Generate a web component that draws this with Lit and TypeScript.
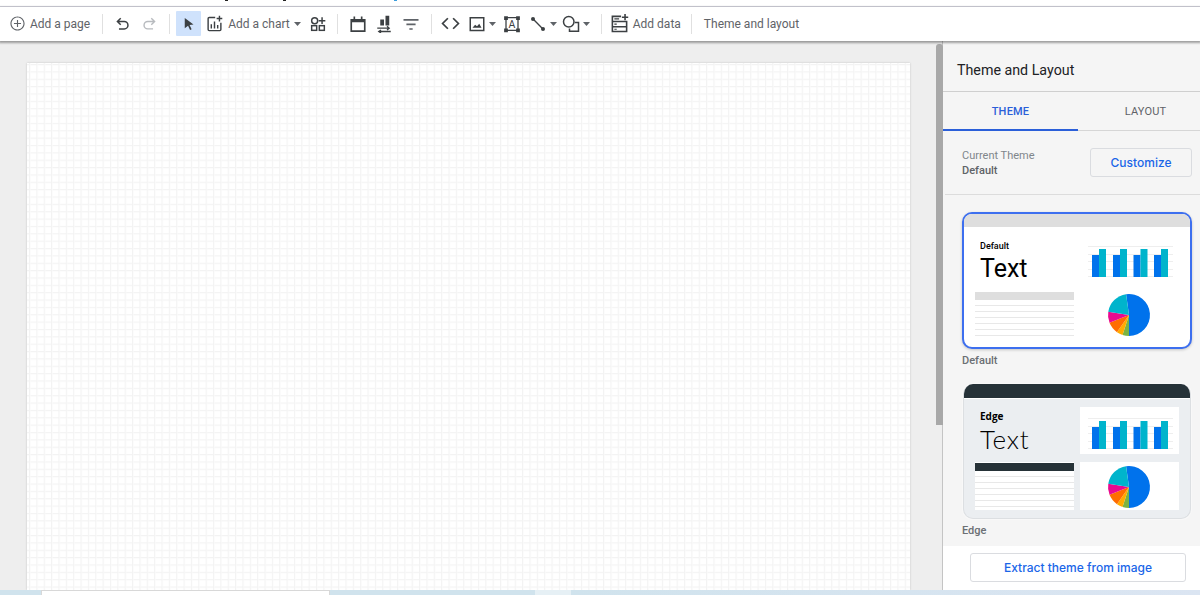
import { LitElement, html, css, svg } from "lit";
import { customElement } from "lit/decorators.js";

const pieSlices: [number, number, string][] = [
  [-8, 180, "#0072ec"],
  [180, 198, "#7cb342"],
  [198, 215, "#ffab00"],
  [215, 248, "#ff6d00"],
  [248, 279, "#e9098f"],
  [279, 352, "#00b4cc"],
];

function arc(cx: number, cy: number, r: number, a: number, b: number) {
  const p = (d: number) => {
    const t = ((d - 90) * Math.PI) / 180;
    return `${(cx + r * Math.cos(t)).toFixed(2)} ${(cy + r * Math.sin(t)).toFixed(2)}`;
  };
  return `M${cx} ${cy}L${p(a)}A${r} ${r} 0 ${b - a > 180 ? 1 : 0} 1 ${p(b)}Z`;
}

const barChart = html`<svg class="fill" viewBox="0 0 99 47">
  ${[11, 19, 26, 34, 41].map((y) => svg`<rect x="8" y="${y}" width="85" height="1" fill="#eeeeee"></rect>`)}
  ${[12, 33, 53.5, 74].map(
    (x) => svg`<rect x="${x}" y="20" width="7" height="22" fill="#0072ec"></rect>
      <rect x="${x + 7}" y="14" width="7" height="28" fill="#00b4cc"></rect>`,
  )}
</svg>`;

const pieChart = html`<svg class="fill" viewBox="0 0 99 47">
  ${pieSlices.map(([a, b, c]) => svg`<path d="${arc(49, 25, 21, a, b)}" fill="${c}"></path>`)}
</svg>`;

const I = (w: number, body: unknown, cls = "") =>
  html`<svg class="ico ${cls}" width="${w}" height="${w}" viewBox="0 0 24 24">${body}</svg>`;

const caret = (cls: string) =>
  html`<svg class="caret ${cls}" width="7" height="4" viewBox="0 0 7 4"><path d="M0 0h7L3.5 4z" fill="#5f6368"></path></svg>`;

@customElement("theme-card")
export class ThemeCard extends LitElement {
  static properties = { name: {}, variant: {} };
  name = "";
  variant = "";
  static styles = css`
    :host { display: block; font-family: Roboto, sans-serif; }
    .card { box-sizing: border-box; height: 137px; border-radius: 10px; overflow: hidden; background: #fff; display: flex; flex-direction: column; }
    .default { width: 230px; border: 2px solid #3d6fef; box-shadow: 0 1px 3px rgba(0,0,0,.2); }
    .edge { width: 228px; height: 135px; margin-left: 1px; background: #ebeef1; border: 1px solid #dcdfe2; border-top: 0; box-shadow: 0 0 0 1px #f8f8f8; }
    .bar { height: 13px; flex: none; background: #dedede; }
    .edge .bar { height: 14px; background: #263238; border-bottom: 1px solid #fff; }
    .grid { display: grid; grid-template-columns: 99px 99px; grid-template-rows: 47px 48px; column-gap: 6px; row-gap: 8px; padding: 8px 0 0 11px; }
    .cell { background: #fff; min-width: 0; }
    .txt { background: transparent; padding: 6px 0 0 5px; display: flex; flex-direction: column; color: #000; }
    .edge .txt { padding-top: 4px; }
    .t1 { font-size: 9px; font-weight: 500; line-height: 11px; }
    .edge .t1 { font-family: "Open Sans", sans-serif; font-weight: 700; font-size: 10px; }
    .t2 { font-size: 25px; line-height: 30px; margin-top: 2px; }
    .edge .t2 { font-family: Lato, sans-serif; font-weight: 300; font-size: 26px; letter-spacing: .8px; }
    .table { display: flex; flex-direction: column; padding-top: 1px; }
    .default .table { background: transparent; padding-top: 2px; }
    .th { height: 8px; background: #dedede; margin-bottom: 5px; flex: none; }
    .edge .th { background: #263238; }
    .row { height: 1px; background: #e8e8e8; margin-bottom: 5px; flex: none; }
    svg.fill { display: block; width: 99px; height: 47px; }
    .label { font-size: 11px; font-weight: 500; color: #6b6f74; margin-top: 5px; line-height: 13px; }
  `;
  render() {
    const v = this.variant;
    return html`<div class="card ${v}">
        <div class="bar"></div>
        <div class="grid">
          <div class="cell txt"><span class="t1">${this.name}</span><span class="t2">Text</span></div>
          <div class="cell">${barChart}</div>
          <div class="cell table">
            <div class="th"></div>
            ${[0, 1, 2, 3, 4, 5].map(() => html`<div class="row"></div>`)}
          </div>
          <div class="cell">${pieChart}</div>
        </div>
      </div>
      <div class="label">${this.name}</div>`;
  }
}

@customElement("app-root")
export class AppRoot extends LitElement {
  static styles = css`
    :host { display: flex; flex-direction: column; width: 1200px; height: 595px; overflow: hidden; background: #fff; font-family: Roboto, sans-serif; color: #5f6368; }
    .top { height: 6px; flex: none; background: #fff; border-bottom: 1px solid #d9d9e3; display: flex; align-items: flex-start; }
    .mk { height: 1px; width: 3px; background: #222; flex: none; }
    .mk.a { margin-left: 225px; } .mk.b { margin-left: 55px; } .mk.c { margin-left: 108px; background: #3b9ddd; }
    .toolbar { height: 34px; flex: none; display: flex; align-items: center; background: #fff; padding: 0 0 1px 9px; box-sizing: border-box; box-shadow: 0 1px 2px 1px rgba(0,0,0,.35); position: relative; z-index: 2; }
    .toolbar span { font-size: 12px; white-space: nowrap; }
    .ico { flex: none; display: block; }
    .caret { flex: none; }
    .sep { width: 1px; height: 20px; background: #e0e0e0; flex: none; }
    .m3 { margin-left: 3px; } .m4 { margin-left: 4px; } .m5 { margin-left: 5px; } .m6 { margin-left: 6px; } .m7 { margin-left: 7px; } .m8 { margin-left: 8px; } .m9 { margin-left: 9px; } .m10 { margin-left: 10px; } .m11 { margin-left: 11px; } .m12 { margin-left: 12px; }
    .sel { width: 25px; height: 25px; background: #cfe2fc; display: flex; align-items: center; justify-content: center; flex: none; border-radius: 1px; }
    .main { flex: 1; display: flex; min-height: 0; }
    .canvas { flex: 1; min-width: 0; background: #eeeeee; padding: 22px 0 0 27px; box-sizing: border-box; position: relative; overflow: hidden; box-shadow: inset -1px 0 0 #c4c4c4; }
    .page { width: 883px; height: 527px; background-color: #fff; background-image: linear-gradient(to right, #f3f3f3 1px, #fafafa 1px, transparent 2px), linear-gradient(to bottom, #f3f3f3 1px, #fafafa 1px, transparent 2px); background-size: 7.36px 7.36px; background-position: 2px 1px; box-shadow: 0 0 2px rgba(0,0,0,.18); }
    .thumb { position: absolute; right: 0; top: 3px; width: 7px; height: 381px; background: #a8a8a8; border-radius: 3px 3px 0 0; }
    .panel { width: 257px; flex: none; background: #f5f5f5; display: flex; flex-direction: column; box-sizing: border-box; position: relative; overflow: hidden; }
    .ttl { height: 51px; flex: none; box-sizing: border-box; padding: 20px 0 0 14px; font-size: 14.25px; line-height: 18px; color: #202124; border-bottom: 1px solid #cfcfcf; }
    .tabs { height: 39px; flex: none; display: flex; border-bottom: 1px solid #d6d6d6; box-sizing: border-box; }
    .tab { flex: none; width: 135px; display: flex; align-items: center; justify-content: center; font-size: 11px; letter-spacing: .2px; box-sizing: border-box; }
    .tab.a { color: #2b5fd9; font-weight: 500; border-bottom: 2px solid #2b5fd9; padding-top: 2px; height: 39px; }
    .tab.b { color: #5f6368; font-weight: 400; }
    .cur { height: 64px; flex: none; margin-left: 2px; box-sizing: border-box; border-bottom: 1px solid #dcdcdc; display: flex; align-items: center; justify-content: space-between; padding: 0 8px 0 17px; }
    .meta { font-size: 11px; line-height: 15px; color: #80868b; }
    .meta b { display: block; font-weight: 500; color: #5f6368; }
    .btn { box-sizing: border-box; border: 1px solid #dadce0; border-radius: 3px; color: #1a66e8; font-family: Inter, Roboto, sans-serif; font-weight: 500; display: flex; align-items: center; justify-content: center; white-space: nowrap; }
    .cust { width: 102px; height: 29px; font-size: 12px; background: #f5f5f5; }
    .cards { flex: 1; min-height: 0; padding: 17px 0 0 19px; display: flex; flex-direction: column; gap: 17px; }
    .foot { height: 44px; flex: none; background: #fff; padding: 7px 0 0 27px; box-sizing: border-box; }
    .ext { width: 216px; height: 29px; font-size: 12px; background: #fff; }
    .strip { height: 5px; flex: none; display: flex; background: #d0e3ed; position: relative; z-index: 3; }
    .s1 { width: 41px; } .s2 { width: 289px; background: #fff; border-top: 1px solid #d8d8d8; border-left: 1px solid #d8d8d8; border-right: 1px solid #d8d8d8; box-sizing: border-box; }
    .s3 { width: 205px; } .s4 { width: 36px; background: #e6f0f5; } .s5 { flex: 1; background: linear-gradient(to right, #d0e3ed, #dbe5f2); }
  `;

  render() {
    const c = "#5f6368";
    const d = "#3c4043";
    return html`
      <div class="top"><i class="mk a"></i><i class="mk b"></i><i class="mk c"></i></div>
      <div class="toolbar">
        ${I(17, svg`<path fill="${c}" d="M12.800 7h-1.600v4.200H7v1.600h4.200V17h1.600v-4.200H17v-1.600h-4.200V7zM12 2C6.500 2 2 6.500 2 12s4.500 10 10 10 10-4.500 10-10S17.500 2 12 2zm0 18.400c-4.600 0-8.400-3.800-8.400-8.400S7.400 3.600 12 3.600s8.400 3.800 8.400 8.400-3.800 8.400-8.400 8.400z"/>`)}
        <span class="m4">Add a page</span>
        <div class="sep m12"></div>

        ${I(17, svg`<path fill="none" stroke="${d}" stroke-width="2.100" d="M9.500 4.500 4.800 9.200l4.700 4.700M5 9.200h9.500a5.200 5.200 0 0 1 0 10.400H7"/>`, "m11")}
        ${I(17, svg`<path fill="none" stroke="#b8bbbf" stroke-width="2" d="M14.500 4.500l4.700 4.700-4.700 4.700M19 9.200H9.500a5.200 5.200 0 0 0 0 10.400H17"/>`, "m10")}
        <div class="sep m11"></div>

        <div class="sel m6">${I(15, svg`<path fill="${d}" d="M6 3l14 10.500-6.300.9L17 21l-2.500 1.200-3.200-6.700L6 19.500z"/>`)}</div>
        ${I(17, svg`<path fill="none" stroke="${d}" stroke-width="2" d="M13 3.500H4.500a1.500 1.500 0 0 0-1.500 1.500v15.500a1.500 1.500 0 0 0 1.500 1.500h15a1.500 1.500 0 0 0 1.500-1.500V11"/><path fill="${d}" d="M6.500 13h2v6h-2zM11 9h2v10h-2zM15.500 14h2v5h-2zM18 1h2v3h3v2h-3v3h-2V6h-3V4h3z"/>`, "m5")}
        <span class="m5">Add a chart</span>
        ${caret("m4")}
        ${I(16, svg`<g fill="none" stroke="${d}" stroke-width="2.200"><circle cx="7" cy="7" r="4.500"/><rect x="2.500" y="14.500" width="7.500" height="7"/><rect x="14" y="14.500" width="7.500" height="7"/></g><path fill="${d}" d="M17 2h2.200v4H23v2.200h-3.800V12H17V8.200h-4V6h4z"/>`, "m9")}
        <div class="sep m11"></div>

        ${I(18, svg`<path fill="none" stroke="${d}" stroke-width="2.200" d="M3 6.500h18v15H3z"/><path fill="${d}" d="M3 5.500h18v4H3zM6 2h2.200v4H6zM15.800 2H18v4h-2.200z"/>`, "m11")}
        ${I(18, svg`<path fill="${d}" d="M14 1h5v13h-5zM7 6h5v8H7z"/><path fill="none" stroke="${d}" stroke-width="1.700" d="M3 17.500h16m-3-2.500 3 2.500-3 2.500M21 22H5m3-2-3 2 3 2"/>`, "m8")}
        ${I(20, svg`<path fill="${c}" d="M3 6h18v2H3zM6.500 11.500h11v2h-11zM10 17h4v2h-4z"/>`, "m8")}
        <div class="sep m10"></div>

        ${I(21, svg`<path fill="none" stroke="${d}" stroke-width="2" d="M9 6l-6 6 6 6M15 6l6 6-6 6"/>`, "m8")}
        ${I(18, svg`<path fill="none" stroke="${d}" stroke-width="2" d="M3 3.500h18v17H3z"/><path fill="${d}" d="M6 17l3.500-4 2.500 2 3-3.500 3 5.500z"/>`, "m7")}
        ${caret("m3")}
        ${I(18, svg`<path fill="none" stroke="${d}" stroke-width="1.700" d="M4 3.500h16v17H4z"/><path fill="${d}" d="M1.500 1.500h5v5h-5zM17.500 1.500h5v5h-5zM1.500 18h5v5h-5zM17.500 18h5v5h-5z"/><text x="12" y="17.500" text-anchor="middle" font-family="Roboto, sans-serif" font-size="14" fill="${d}">A</text>`, "m7")}
        ${I(16, svg`<path stroke="${d}" stroke-width="2" d="M5 5l14 14"/><circle cx="4.500" cy="4.500" r="3" fill="${d}"/><circle cx="19.500" cy="19.500" r="3" fill="${d}"/>`, "m9")}
        ${caret("m4")}
        ${I(18, svg`<circle cx="9" cy="9" r="7" fill="none" stroke="${d}" stroke-width="2"/><path fill="none" stroke="${d}" stroke-width="2" d="M17 10h5v11.500H10V18"/>`, "m5")}
        ${caret("m3")}
        <div class="sep m11"></div>

        ${I(19, svg`<g fill="none" stroke="${d}" stroke-width="2"><path d="M14 3H3v6.500h18V13M3 9.500v6.500h18v-6M3 16v6h18v-6"/></g><path fill="${d}" d="M5.500 5.500h6v1.500h-6zM5.500 12h3v1.500h-3zM5.500 18.500h3V20h-3zM18 0h2v3h3v2h-3v3h-2V5h-3V3h3z"/>`, "m8")}
        <span class="m4">Add data</span>
        <div class="sep m10"></div>
        <span class="m12">Theme and layout</span>
      </div>
      <div class="main">
        <div class="canvas">
          <div class="page"></div>
          <div class="thumb"></div>
        </div>
        <div class="panel">
          <div class="ttl">Theme and Layout</div>
          <div class="tabs">
            <div class="tab a">THEME</div>
            <div class="tab b">LAYOUT</div>
          </div>
          <div class="cur">
            <div class="meta">Current Theme<b>Default</b></div>
            <div class="btn cust">Customize</div>
          </div>
          <div class="cards">
            <theme-card name="Default" variant="default"></theme-card>
            <theme-card name="Edge" variant="edge"></theme-card>
          </div>
          <div class="foot"><div class="btn ext">Extract theme from image</div></div>
        </div>
      </div>
      <div class="strip">
        <div class="s1"></div><div class="s2"></div><div class="s3"></div><div class="s4"></div><div class="s5"></div>
      </div>
    `;
  }
}
